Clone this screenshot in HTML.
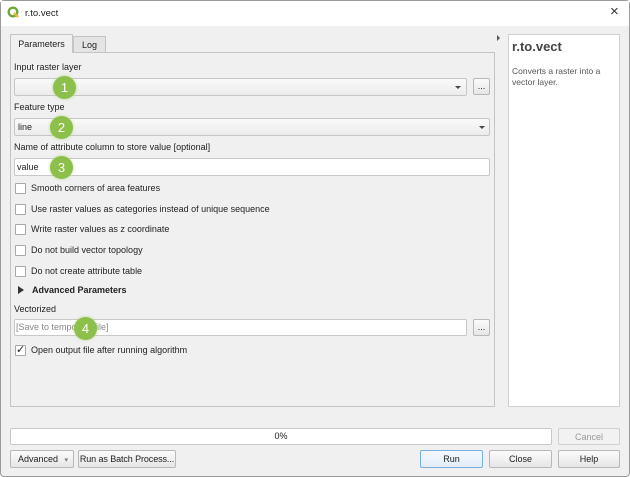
<!DOCTYPE html>
<html><head><style>
*{box-sizing:border-box;margin:0;padding:0}
body{width:630px;height:477px;overflow:hidden;background:#fff;font-family:"Liberation Sans",sans-serif;font-size:9px;color:#222;position:relative;white-space:nowrap}
.a{position:absolute}
.win{left:0;top:0;width:630px;height:477px;border:1px solid #9a9a9a;border-radius:4px;background:#f0f0f0}
.tb{left:1px;top:1px;width:628px;height:25px;background:#fff}
.box{position:absolute;border:1px solid #c8c8c8;border-radius:2px;background:#fff}
.cb{background:linear-gradient(#fafafa,#ececec);border-color:#c6c6c6}
.btn{position:absolute;border:1px solid #b8b8b8;border-radius:2px;background:linear-gradient(#fbfbfb,#e6e6e6);text-align:center;line-height:16px;font-size:9px;white-space:nowrap}
.lbl{position:absolute;left:14px;font-size:9px}
.chk{position:absolute;left:15px;width:11px;height:11px;border:1px solid #a8a8a8;background:#fff;border-radius:1px}
.ct{position:absolute;left:31px;font-size:9px}
.dot{position:absolute;width:23px;height:23px;border-radius:50%;background:#8dc04a;color:#fff;font-size:13px;text-align:center;line-height:23px;box-shadow:0 0 3px #b8d890}
.arr{position:absolute;width:0;height:0;border-left:3px solid transparent;border-right:3px solid transparent;border-top:3px solid #444}
</style></head><body>
<div class="a win"></div>
<div class="a tb"></div>
<svg class="a" style="left:7px;top:6px" width="12" height="12" viewBox="0 0 12 12"><circle cx="6" cy="6" r="4.3" fill="none" stroke="#6ea83a" stroke-width="2.4"/><path d="M7 7 L11 11" stroke="#e9b73a" stroke-width="2.4"/></svg>
<div class="a" style="left:25px;top:8px;font-size:9.5px">r.to.vect</div>
<div class="a" style="left:610px;top:3px;font-size:15px;color:#333">×</div>

<div class="a" style="left:10px;top:52px;width:485px;height:355px;border:1px solid #c4c4c4;background:#f0f0f0"></div>
<div class="a" style="left:10px;top:34px;width:63px;height:19px;border:1px solid #c4c4c4;border-bottom:none;background:#f0f0f0;text-align:center;line-height:18px">Parameters</div>
<div class="a" style="left:73px;top:36px;width:33px;height:16px;border:1px solid #c4c4c4;border-bottom:none;background:#e4e4e4;text-align:center;line-height:16px">Log</div>

<div class="lbl" style="top:62px">Input raster layer</div>
<div class="box cb" style="left:14px;top:78px;width:453px;height:18px"></div>
<div class="arr" style="left:455px;top:86px"></div>
<div class="btn" style="left:473px;top:78px;width:17px;height:17px;line-height:14px">...</div>

<div class="lbl" style="top:102px">Feature type</div>
<div class="box cb" style="left:14px;top:118px;width:476px;height:18px"></div>
<div class="a" style="left:18px;top:122px">line</div>
<div class="arr" style="left:479px;top:126px"></div>

<div class="lbl" style="top:142px">Name of attribute column to store value [optional]</div>
<div class="box" style="left:14px;top:158px;width:476px;height:18px"></div>
<div class="a" style="left:17px;top:162px">value</div>

<div class="chk" style="top:183px"></div><div class="ct" style="top:183px">Smooth corners of area features</div>
<div class="chk" style="top:204px"></div><div class="ct" style="top:204px">Use raster values as categories instead of unique sequence</div>
<div class="chk" style="top:224px"></div><div class="ct" style="top:224px">Write raster values as z coordinate</div>
<div class="chk" style="top:245px"></div><div class="ct" style="top:245px">Do not build vector topology</div>
<div class="chk" style="top:266px"></div><div class="ct" style="top:266px">Do not create attribute table</div>

<div class="a" style="left:18px;top:286px;width:0;height:0;border-top:4px solid transparent;border-bottom:4px solid transparent;border-left:6px solid #333"></div>
<div class="a" style="left:32px;top:285px;font-weight:bold">Advanced Parameters</div>

<div class="lbl" style="top:304px">Vectorized</div>
<div class="box" style="left:14px;top:319px;width:453px;height:17px"></div>
<div class="a" style="left:16px;top:322px;color:#888">[Save to temporary file]</div>
<div class="btn" style="left:473px;top:319px;width:17px;height:17px;line-height:14px">...</div>
<div class="chk" style="top:345px"></div>
<div class="a" style="left:16px;top:343px;font-size:11px">✓</div>
<div class="ct" style="top:345px">Open output file after running algorithm</div>

<div class="dot" style="left:53px;top:76px">1</div>
<div class="dot" style="left:50px;top:116px">2</div>
<div class="dot" style="left:50px;top:156px">3</div>
<div class="dot" style="left:74px;top:317px">4</div>

<div class="a" style="left:497px;top:35px;width:0;height:0;border-top:3px solid transparent;border-bottom:3px solid transparent;border-left:3px solid #555"></div>
<div class="a" style="left:508px;top:34px;width:112px;height:373px;border:1px solid #d0d0d0;background:#fff"></div>
<div class="a" style="left:512px;top:39px;font-size:13px;font-weight:bold;color:#444">r.to.vect</div>
<div class="a" style="left:512px;top:66px;font-size:8.5px;color:#555;line-height:11px">Converts a raster into a<br>vector layer.</div>

<div class="box" style="left:10px;top:428px;width:542px;height:17px;text-align:center;line-height:15px">0%</div>
<div class="btn" style="left:558px;top:428px;width:62px;height:17px;color:#999;border-color:#d0d0d0;background:#f2f2f2">Cancel</div>

<div class="btn" style="left:10px;top:450px;width:64px;height:18px;text-align:left;padding-left:7px">Advanced <span style="color:#777;margin-left:4px;font-size:7px">▾</span></div>
<div class="btn" style="left:78px;top:450px;width:98px;height:18px;letter-spacing:-0.1px">Run as Batch Process...</div>
<div class="btn" style="left:420px;top:450px;width:63px;height:18px;border-color:#7ab0e0;background:linear-gradient(#f4f9fe,#e2edf8)">Run</div>
<div class="btn" style="left:489px;top:450px;width:63px;height:18px">Close</div>
<div class="btn" style="left:558px;top:450px;width:62px;height:18px">Help</div>
</body></html>
